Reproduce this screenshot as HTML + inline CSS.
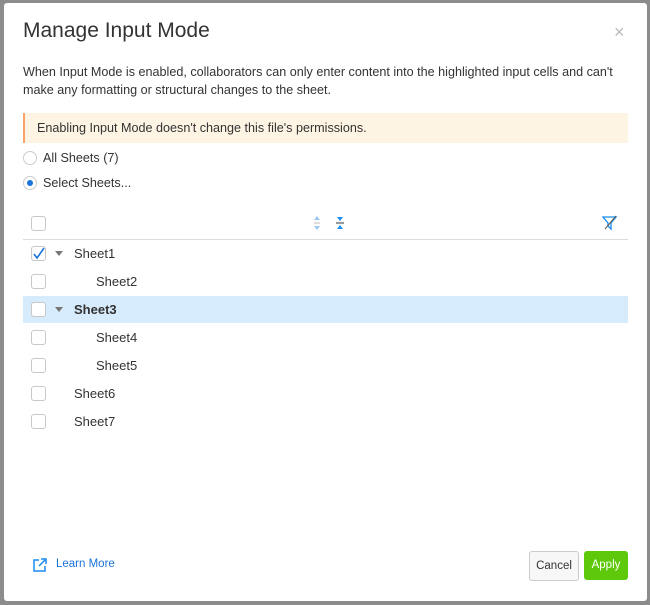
<!DOCTYPE html>
<html><head><style>
body{margin:0;width:650px;height:605px;background:#8c8c8c;font-family:"Liberation Sans",sans-serif;position:relative;overflow:hidden}
.d{position:absolute;left:4px;top:3px;width:643px;height:598px;background:#fff;border-radius:3px}
.a{position:absolute;white-space:nowrap}
.cb{position:absolute;left:31px;width:13px;height:13px;border:1px solid #c8c8c8;border-radius:3px;background:#fff}
.t{position:absolute;font-size:13px;color:#333}
.tri{position:absolute;left:55px;width:0;height:0;border-left:4px solid transparent;border-right:4px solid transparent;border-top:5px solid #777}
</style></head><body>
<div class="d"></div>
<div class="a" style="left:23px;top:19px;font-size:21px;color:#333">Manage Input Mode</div>
<div class="a" style="left:614px;top:22px;font-size:18px;color:#bbb">×</div>
<div class="a" style="left:23px;top:63px;font-size:12.6px;color:#333;line-height:18px">When Input Mode is enabled, collaborators can only enter content into the highlighted input cells and can't<br>make any formatting or structural changes to the sheet.</div>
<div class="a" style="left:23px;top:113px;width:603px;height:30px;background:#fdf4e3;border-left:2px solid #f5a36a"></div>
<div class="a" style="left:37px;top:121px;font-size:12.6px;color:#333">Enabling Input Mode doesn't change this file's permissions.</div>
<div class="a" style="left:23px;top:151px;width:12px;height:12px;border:1px solid #ccc;border-radius:50%"></div>
<div class="a" style="left:43px;top:151px;font-size:12.6px;color:#333">All Sheets (7)</div>
<div class="a" style="left:23px;top:176px;width:12px;height:12px;border:1px solid #ccc;border-radius:50%"></div>
<div class="a" style="left:27px;top:180px;width:6px;height:6px;background:#1a73d9;border-radius:50%"></div>
<div class="a" style="left:43px;top:176px;font-size:12.6px;color:#333">Select Sheets...</div>
<div class="cb" style="top:216px"></div>
<svg class="a" style="left:311px;top:216px" width="40" height="16"><path d="M3 4l3-4 3 4zM3 10l3 4 3-4z" fill="#9cc7f5"/><path d="M3 7h6" stroke="#bbb"/><path d="M26 1h6l-3 4zM26 13h6l-3-4z" fill="#1a8cf0"/><path d="M25 7h8" stroke="#333"/></svg>
<svg class="a" style="left:602px;top:215px" width="16" height="16"><path d="M1 2h13l-5 6v6l-3-3V8z" fill="none" stroke="#1a8cf0" stroke-width="1.3"/><path d="M3 14L14 1" stroke="#555"/></svg>
<div class="a" style="left:23px;top:239px;width:605px;height:1px;background:#ddd"></div>
<div class="a" style="left:23px;top:296px;width:605px;height:27px;background:#d6ebfb"></div>
<div class="cb" style="top:246px"></div><svg class="a" style="left:31px;top:246px" width="15" height="15"><path d="M3 8l3 4 7-10" fill="none" stroke="#1a73d9" stroke-width="1.6"/></svg>
<div class="tri" style="top:251px"></div><div class="t" style="left:74px;top:246px">Sheet1</div>
<div class="cb" style="top:274px"></div><div class="t" style="left:96px;top:274px">Sheet2</div>
<div class="cb" style="top:302px"></div><div class="tri" style="top:307px"></div><div class="t" style="left:74px;top:302px;font-weight:bold">Sheet3</div>
<div class="cb" style="top:330px"></div><div class="t" style="left:96px;top:330px">Sheet4</div>
<div class="cb" style="top:358px"></div><div class="t" style="left:96px;top:358px">Sheet5</div>
<div class="cb" style="top:386px"></div><div class="t" style="left:74px;top:386px">Sheet6</div>
<div class="cb" style="top:414px"></div><div class="t" style="left:74px;top:414px">Sheet7</div>
<svg class="a" style="left:33px;top:558px" width="14" height="14"><path d="M6 2H1v11h11V8" fill="none" stroke="#1a8cf0" stroke-width="1.5"/><path d="M6 8l6-6M8 1h5v5" fill="none" stroke="#1a8cf0" stroke-width="1.5"/></svg>
<div class="a" style="left:56px;top:558px;font-size:11.5px;color:#1a73d9">Learn More</div>
<div class="a" style="left:529px;top:551px;width:48px;height:28px;border:1px solid #ccc;border-radius:3px;background:#f7f7f7;font-size:11.5px;color:#333;text-align:center;line-height:28px">Cancel</div>
<div class="a" style="left:584px;top:551px;width:44px;height:29px;border-radius:3px;background:#5ec90a;font-size:11.5px;color:#fff;text-align:center;line-height:29px">Apply</div>
</body></html>
